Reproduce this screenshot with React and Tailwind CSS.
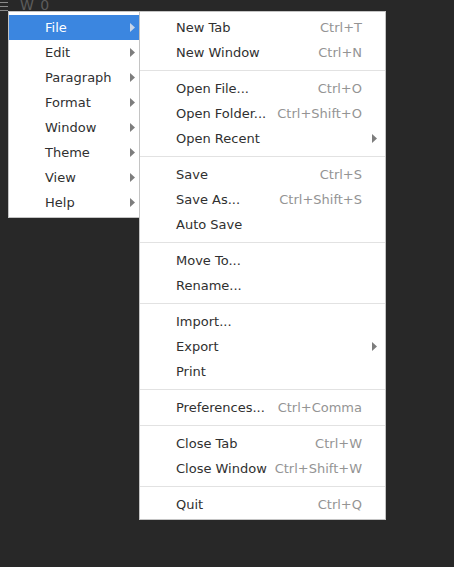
import React from "react";

const mainItems = ["File", "Edit", "Paragraph", "Format", "Window", "Theme", "View", "Help"];

const fileGroups = [
  [
    ["New Tab", "Ctrl+T"],
    ["New Window", "Ctrl+N"],
  ],
  [
    ["Open File...", "Ctrl+O"],
    ["Open Folder...", "Ctrl+Shift+O"],
    ["Open Recent", null, true],
  ],
  [
    ["Save", "Ctrl+S"],
    ["Save As...", "Ctrl+Shift+S"],
    ["Auto Save"],
  ],
  [["Move To..."], ["Rename..."]],
  [["Import..."], ["Export", null, true], ["Print"]],
  [["Preferences...", "Ctrl+Comma"]],
  [
    ["Close Tab", "Ctrl+W"],
    ["Close Window", "Ctrl+Shift+W"],
  ],
  [["Quit", "Ctrl+Q"]],
];

function Arrow({ light, className }) {
  return (
    <svg width="5" height="9" viewBox="0 0 5 9" className={className}>
      <path d="M0 0 L5 4.5 L0 9 Z" fill={light ? "#c9d6e8" : "#7d7d7d"} />
    </svg>
  );
}

export default function App() {
  return (
    <div
      className="relative w-[454px] h-[567px] overflow-hidden bg-[#282828]"
      style={{ fontFamily: '"DejaVu Sans", sans-serif' }}
    >
      {/* top bar */}
      <div className="flex items-start h-[11px] overflow-hidden">
        <svg width="9" height="11" viewBox="0 0 9 11" className="shrink-0">
          <rect x="0" y="2" width="8" height="1" fill="#8a8a8a" />
          <rect x="0" y="6" width="8" height="1" fill="#8a8a8a" />
          <rect x="0" y="10" width="8" height="1" fill="#8a8a8a" />
        </svg>
        <span className="ml-[11px] mt-[-2px] text-[14px] leading-[14px] text-[#5c5c5c] tracking-[1px] whitespace-nowrap">
          W 0
        </span>
      </div>

      {/* main menu */}
      <div className="absolute left-[8px] top-[11px] w-[132px] bg-white border border-[#c4c4c4] pt-[3px] pb-[2px] text-[13px] text-[#303030]">
        {mainItems.map((label, i) => {
          const active = i === 0;
          return (
            <div
              key={label}
              className={
                "h-[25px] flex items-center pl-[36px] pr-[4px] " +
                (active ? "bg-[#3b86e0] text-white" : "")
              }
            >
              <span className="flex-1">{label}</span>
              <Arrow light={active} className="shrink-0" />
            </div>
          );
        })}
      </div>

      {/* file submenu */}
      <div className="absolute left-[139px] top-[11px] w-[247px] bg-white border border-[#c4c4c4] pt-[3px] pb-[2px] text-[13px] text-[#303030]">
        {fileGroups.map((group, gi) => (
          <div key={gi}>
            {gi > 0 && <div className="h-px bg-[#e2e2e2] my-[5px]" />}
            {group.map(([label, shortcut, sub]) => (
              <div
                key={label}
                className={
                  "h-[25px] flex items-center pl-[36px] " + (sub ? "pr-[8px]" : "pr-[23px]")
                }
              >
                <span className="flex-1 whitespace-nowrap">{label}</span>
                {shortcut && (
                  <span className="ml-[6px] whitespace-nowrap text-[#949494]">{shortcut}</span>
                )}
                {sub && <Arrow className="shrink-0" />}
              </div>
            ))}
          </div>
        ))}
      </div>
    </div>
  );
}
